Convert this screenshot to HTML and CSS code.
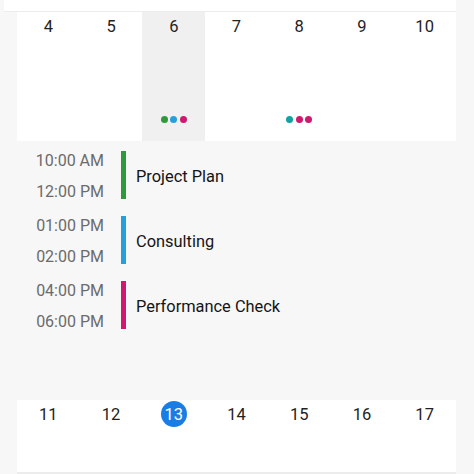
FILE: index.html
```html
<!DOCTYPE html>
<html>
<head>
<meta charset="utf-8">
<link rel="stylesheet" href="styles.css">
</head>
<body>
<div class="top-strip"></div>
<div class="week week-top">
  <div class="day"><span class="num">4</span></div>
  <div class="day"><span class="num">5</span></div>
  <div class="day selected"><span class="num">6</span>
    <div class="dots"><i class="dot green"></i><i class="dot blue"></i><i class="dot pink"></i></div>
  </div>
  <div class="day"><span class="num">7</span></div>
  <div class="day"><span class="num">8</span>
    <div class="dots"><i class="dot teal"></i><i class="dot pink"></i><i class="dot pink"></i></div>
  </div>
  <div class="day"><span class="num">9</span></div>
  <div class="day"><span class="num">10</span></div>
</div>
<div class="agenda">
  <div class="event">
    <div class="times"><span>10:00 AM</span><span>12:00 PM</span></div>
    <div class="bar green"></div>
    <div class="title">Project Plan</div>
  </div>
  <div class="event">
    <div class="times"><span>01:00 PM</span><span>02:00 PM</span></div>
    <div class="bar blue"></div>
    <div class="title">Consulting</div>
  </div>
  <div class="event">
    <div class="times"><span>04:00 PM</span><span>06:00 PM</span></div>
    <div class="bar pink"></div>
    <div class="title">Performance Check</div>
  </div>
</div>
<div class="week week-bottom">
  <div class="day"><span class="num">11</span></div>
  <div class="day"><span class="num">12</span></div>
  <div class="day"><span class="num today">13</span></div>
  <div class="day"><span class="num">14</span></div>
  <div class="day"><span class="num">15</span></div>
  <div class="day"><span class="num">16</span></div>
  <div class="day"><span class="num">17</span></div>
</div>
</body>
</html>
```
FILE: styles.css
```css
html, body {
  margin: 0;
  padding: 0;
}
body {
  width: 474px;
  height: 474px;
  overflow: hidden;
  background: #f7f7f7;
  font-family: Roboto, "Liberation Sans", sans-serif;
}
.top-strip {
  height: 11px;
  margin: 0 18px 0 4px;
  background: #ffffff;
  border-bottom: 1px solid #ececec;
}
.week {
  display: grid;
  grid-template-columns: repeat(7, 1fr);
  margin: 0 18px 0 17px;
  background: #ffffff;
}
.week-top {
  height: 129px;
}
.week-bottom {
  height: 72px;
  border-bottom: 2px solid #ececec;
}
.day {
  display: flex;
  flex-direction: column;
  align-items: center;
  position: relative;
}
.week-top .day {
  padding-top: 5px;
}
.week-bottom .day {
  padding-top: 1px;
}
.day.selected {
  background: #f0f0f0;
}
.num {
  font-size: 16.5px;
  line-height: 20px;
  color: #222222;
}
.week-bottom .num {
  width: 26px;
  height: 26px;
  line-height: 28px;
  text-align: center;
  border-radius: 50%;
}
.num.today {
  background: #1a7de6;
  color: #ffffff;
}
.dots {
  display: flex;
  gap: 2.5px;
  margin-top: 78.5px;
}
.dot {
  display: block;
  width: 7px;
  height: 7px;
  border-radius: 50%;
}
.green { background: #2f9a3b; }
.blue { background: #24a0de; }
.pink { background: #d1186f; }
.teal { background: #12a2a4; }
.agenda {
  height: 259px;
  box-sizing: border-box;
  padding-top: 10px;
}
.event {
  display: flex;
  align-items: flex-start;
  height: 65px;
}
.times {
  width: 104px;
  display: flex;
  flex-direction: column;
  align-items: flex-end;
  gap: 11.4px;
  font-size: 16px;
  line-height: 20px;
  color: #6b6b6b;
}
.bar {
  width: 5px;
  height: 47.5px;
  margin-left: 17px;
}
.title {
  margin-left: 10px;
  margin-top: 15.5px;
  font-size: 16.4px;
  line-height: 20px;
  color: #141414;
}
```
